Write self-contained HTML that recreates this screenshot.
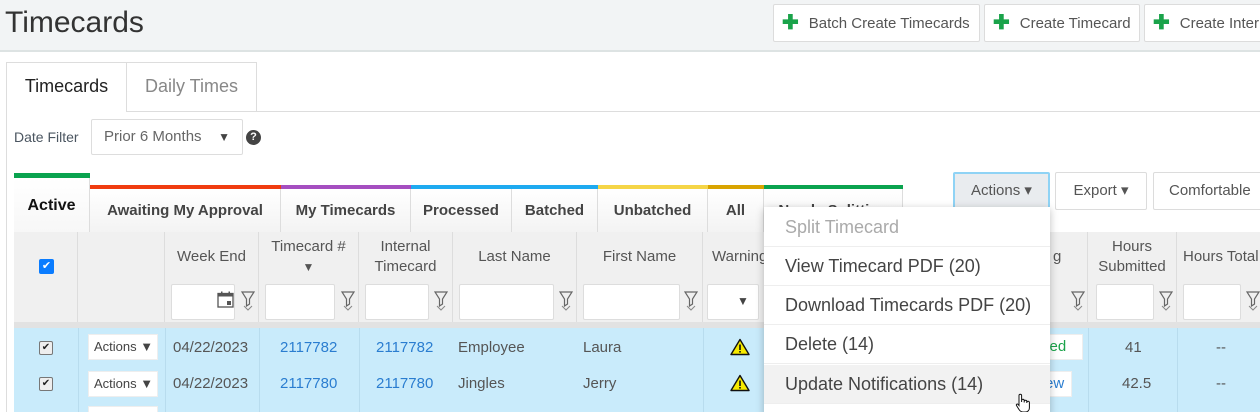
<!DOCTYPE html>
<html><head><style>
*{box-sizing:border-box;margin:0;padding:0}
html,body{width:1260px;height:412px;overflow:hidden}
body{background:#fff;font-family:"Liberation Sans",sans-serif;color:#333;position:relative}
.a{position:absolute}
.hdr{left:0;top:0;width:1260px;height:52px;background:#f2f4f5;border-bottom:2px solid #dde3e3}
.btn{background:#fff;border:1px solid #dcdcdc;border-radius:2px;font-size:15px;color:#555;height:38px;line-height:36px;white-space:nowrap;overflow:hidden}
.plus{color:#1aa34a;font-weight:bold;font-size:20px;vertical-align:-1px;margin:0 10px 0 8px}
.tab{font-size:15px;font-weight:bold;color:#444;text-align:center;background:linear-gradient(#fff,#f3f3f3);border-right:1px solid #ddd}
.bar{height:4px;top:185px}
.th{background:#f0f0f0;border-right:1px solid #ddd;top:232px;height:90px;font-size:15px;color:#555;text-align:center}
.inp{background:#fff;border:1px solid #ddd;height:36px;top:284px;border-radius:2px}
.fil{top:290px;width:14px;height:22px}
.row{background:#c9ebfb;left:14px;width:1246px}
.cell{font-size:15px;color:#555}
.lnk{color:#2a7dd0}
.ab{background:#fff;border:1px solid #eee;font-size:13px;color:#444;height:26px;line-height:24px;padding-left:5px;width:70px}
.cb{width:14px;height:14px;border:1px solid #777;background:#eee;border-radius:2px;font-size:10px;line-height:12px;text-align:center;color:#222}
.mi{left:764px;width:286px;font-size:18px;color:#444;padding-left:21px;height:39px;line-height:39px;border-bottom:1px solid #eee}
</style></head><body>
<svg width="0" height="0" style="position:absolute"><defs>
<symbol id="f" viewBox="0 0 14 22"><path d="M1 2h12l-4.5 7v5l-3 2v-7z" fill="none" stroke="#666" stroke-width="1.2"/><path d="M3 16l4 4 4-4" fill="none" stroke="#888" stroke-width="1"/></symbol>
<symbol id="w" viewBox="0 0 20 18"><path d="M10 1.5L19 16.5H1z" fill="#f7ea00" stroke="#111" stroke-width="1.4" stroke-linejoin="round"/><rect x="9.2" y="6.5" width="1.6" height="5.5" fill="#111"/><rect x="9.2" y="13" width="1.6" height="1.6" fill="#111"/></symbol>
</defs></svg>
<div class="a hdr"></div>
<div class="a" style="left:5px;top:6px;font-size:30px;color:#333">Timecards</div>
<div class="a btn" style="left:773px;top:4px;width:207px"><span class="plus">✚</span>Batch Create Timecards</div>
<div class="a btn" style="left:984px;top:4px;width:156px"><span class="plus">✚</span>Create Timecard</div>
<div class="a btn" style="left:1144px;top:4px;width:130px"><span class="plus">✚</span>Create Inter</div>

<div class="a" style="left:6px;top:62px;width:1px;height:350px;background:#ddd"></div>
<div class="a" style="left:6px;top:111px;width:1254px;height:1px;background:#ddd"></div>
<div class="a" style="left:6px;top:62px;width:121px;height:50px;border:1px solid #ddd;border-bottom:none;background:#fff;font-size:18px;color:#222;text-align:center;line-height:46px">Timecards</div>
<div class="a" style="left:126px;top:62px;width:131px;height:49px;border:1px solid #ddd;border-bottom:none;font-size:18px;color:#888;text-align:center;line-height:46px">Daily Times</div>
<div class="a" style="left:14px;top:129px;font-size:14px;color:#4a5560">Date Filter</div>
<div class="a" style="left:91px;top:119px;width:152px;height:36px;border:1px solid #ddd;border-radius:2px;font-size:15px;color:#666;line-height:34px;padding-left:12px">Prior 6 Months <span style="position:absolute;right:12px;font-size:12px;color:#444">▼</span></div>
<div class="a" style="left:246px;top:130px;width:15px;height:15px;border-radius:50%;background:#444;color:#fff;font-size:11px;font-weight:bold;text-align:center;line-height:15px">?</div>

<div class="a" style="left:14px;top:173px;width:76px;height:5px;background:#0aa34f"></div>
<div class="a tab" style="left:14px;top:178px;height:54px;line-height:56px;width:76px;background:linear-gradient(#fff,#f7f7f7);color:#111;font-size:16px">Active</div>
<div class="a bar" style="left:90px;width:191px;background:#f03c0f"></div>
<div class="a bar" style="left:281px;width:130px;background:#a54ec0"></div>
<div class="a bar" style="left:411px;width:187px;background:#1eaaf0"></div>
<div class="a bar" style="left:598px;width:110px;background:#f5d547"></div>
<div class="a bar" style="left:708px;width:56px;background:#d9a400"></div>
<div class="a bar" style="left:764px;width:139px;background:#0aa34f"></div>
<div class="a tab" style="left:90px;width:191px;top:189px;height:43px;line-height:43px">Awaiting My Approval</div>
<div class="a tab" style="left:281px;width:130px;top:189px;height:43px;line-height:43px">My Timecards</div>
<div class="a tab" style="left:411px;width:101px;top:189px;height:43px;line-height:43px">Processed</div>
<div class="a tab" style="left:512px;width:86px;top:189px;height:43px;line-height:43px">Batched</div>
<div class="a tab" style="left:598px;width:110px;top:189px;height:43px;line-height:43px">Unbatched</div>
<div class="a tab" style="left:708px;width:56px;top:189px;height:43px;line-height:43px">All</div>
<div class="a tab" style="left:764px;width:139px;top:189px;height:43px;line-height:43px">Needs Splitting</div>

<div class="a th" style="left:14px;width:64px"><div class="a" style="left:25px;top:27px;width:15px;height:15px;background:#0a7cff;border-radius:2px;color:#fff;font-size:11px;line-height:15px">✔</div></div>
<div class="a th" style="left:78px;width:87px"></div>
<div class="a th" style="left:165px;width:94px;padding-top:16px">Week End</div>
<div class="a th" style="left:259px;width:100px;padding-top:5px;line-height:20px">Timecard #<br><span style="font-size:12px">▼</span></div>
<div class="a th" style="left:359px;width:94px;padding-top:5px;line-height:20px">Internal<br>Timecard</div>
<div class="a th" style="left:453px;width:124px;padding-top:16px">Last Name</div>
<div class="a th" style="left:577px;width:126px;padding-top:16px">First Name</div>
<div class="a th" style="left:703px;width:300px;padding-top:16px;text-align:left;padding-left:9px">Warnings</div>
<div class="a th" style="left:1003px;width:85px;padding-top:16px;text-align:left;padding-left:50px">g</div>
<div class="a th" style="left:1088px;width:89px;padding-top:5px;line-height:20px">Hours<br>Submitted</div>
<div class="a th" style="left:1177px;width:90px;padding-top:16px;text-align:left;padding-left:6px">Hours Total</div>
<div class="a" style="left:14px;top:322px;width:1246px;height:6px;background:#e2e2e2"></div>

<div class="a inp" style="left:171px;width:64px"></div>
<svg class="a" style="left:217px;top:291px" width="17" height="17" viewBox="0 0 17 17"><rect x="1" y="2.5" width="15" height="13.5" fill="none" stroke="#555" stroke-width="1.3"/><rect x="1" y="2.5" width="15" height="3" fill="#555"/><rect x="4" y="0.5" width="1.5" height="3" fill="#555"/><rect x="11.5" y="0.5" width="1.5" height="3" fill="#555"/><rect x="10" y="10" width="4" height="4" fill="#555"/></svg>
<svg class="a fil" style="left:241px"><use href="#f"/></svg>
<div class="a inp" style="left:265px;width:70px"></div><svg class="a fil" style="left:341px"><use href="#f"/></svg>
<div class="a inp" style="left:365px;width:64px"></div><svg class="a fil" style="left:434px"><use href="#f"/></svg>
<div class="a inp" style="left:459px;width:95px"></div><svg class="a fil" style="left:559px"><use href="#f"/></svg>
<div class="a inp" style="left:583px;width:97px"></div><svg class="a fil" style="left:684px"><use href="#f"/></svg>
<div class="a inp" style="left:707px;width:52px"></div><div class="a" style="left:737px;top:294px;font-size:12px;color:#444">▼</div>
<div class="a inp" style="left:1010px;width:28px"></div><svg class="a fil" style="left:1071px"><use href="#f"/></svg>
<div class="a inp" style="left:1096px;width:58px"></div><svg class="a fil" style="left:1159px"><use href="#f"/></svg>
<div class="a inp" style="left:1183px;width:58px"></div><svg class="a fil" style="left:1246px"><use href="#f"/></svg>

<div class="a row" style="top:328px;height:84px"></div>
<div class="a" style="left:78px;top:328px;width:1px;height:84px;background:#b8dcee"></div>
<div class="a" style="left:165px;top:328px;width:1px;height:84px;background:#b8dcee"></div>
<div class="a" style="left:259px;top:328px;width:1px;height:84px;background:#b8dcee"></div>
<div class="a" style="left:359px;top:328px;width:1px;height:84px;background:#b8dcee"></div>
<div class="a" style="left:703px;top:328px;width:1px;height:84px;background:#b8dcee"></div>
<div class="a" style="left:1088px;top:328px;width:1px;height:84px;background:#b8dcee"></div>
<div class="a" style="left:1177px;top:328px;width:1px;height:84px;background:#b8dcee"></div>

<div class="a cb" style="left:39px;top:341px">✔</div>
<div class="a ab" style="left:88px;top:334px">Actions ▼</div>
<div class="a cell" style="left:173px;top:339px">04/22/2023</div>
<div class="a cell lnk" style="left:280px;top:339px">2117782</div>
<div class="a cell lnk" style="left:376px;top:339px">2117782</div>
<div class="a cell" style="left:458px;top:339px">Employee</div>
<div class="a cell" style="left:583px;top:339px">Laura</div>
<svg class="a" style="left:730px;top:338px" width="20" height="18"><use href="#w"/></svg>
<div class="a" style="left:1000px;top:334px;width:83px;height:26px;background:#fff;border:1px solid #eee;font-size:15px;color:#1aa34a;line-height:24px;padding-left:36px">eted</div>
<div class="a cell" style="left:1125px;top:339px">41</div>
<div class="a cell" style="left:1216px;top:339px">--</div>

<div class="a cb" style="left:39px;top:377px">✔</div>
<div class="a ab" style="left:88px;top:371px">Actions ▼</div>
<div class="a cell" style="left:173px;top:375px">04/22/2023</div>
<div class="a cell lnk" style="left:280px;top:375px">2117780</div>
<div class="a cell lnk" style="left:376px;top:375px">2117780</div>
<div class="a cell" style="left:458px;top:375px">Jingles</div>
<div class="a cell" style="left:583px;top:375px">Jerry</div>
<svg class="a" style="left:730px;top:374px" width="20" height="18"><use href="#w"/></svg>
<div class="a" style="left:1000px;top:371px;width:72px;height:26px;background:#fff;border:1px solid #eee;font-size:15px;color:#2a7dd0;line-height:24px;padding-left:44px">ew</div>
<div class="a cell" style="left:1122px;top:375px">42.5</div>
<div class="a cell" style="left:1216px;top:375px">--</div>
<div class="a ab" style="left:88px;top:406px"></div>

<div class="a btn" style="left:953px;top:172px;width:97px;background:#e9ecef;border:2px solid #8fd3f5;text-align:center;line-height:34px">Actions ▾</div>
<div class="a btn" style="left:1055px;top:172px;width:92px;text-align:center">Export ▾</div>
<div class="a btn" style="left:1153px;top:172px;width:120px;padding-left:15px">Comfortable</div>

<div class="a" style="left:764px;top:207px;width:286px;height:210px;background:#fff;box-shadow:0 2px 8px rgba(0,0,0,.25)"></div>
<div class="a mi" style="top:208px;color:#aaa">Split Timecard</div>
<div class="a mi" style="top:247px">View Timecard PDF (20)</div>
<div class="a mi" style="top:286px">Download Timecards PDF (20)</div>
<div class="a mi" style="top:325px">Delete (14)</div>
<div class="a mi" style="top:365px;background:#f2f2f2">Update Notifications (14)</div>
<svg class="a" style="left:1014px;top:393px" width="18" height="20" viewBox="0 0 18 20"><path d="M5 11V2.5a1.3 1.3 0 0 1 2.6 0V9V7.5a1.3 1.3 0 0 1 2.6 0V9.5V8.5a1.3 1.3 0 0 1 2.6 0V10V9.5a1.3 1.3 0 0 1 2.6 0V15c0 2-1.5 4-4 4H9c-2 0-3-1-4-2.5L2.5 12.5c-.6-1 .6-2 1.5-1.2L5 12.5z" fill="#fff" stroke="#111" stroke-width="1"/></svg>
</body></html>
